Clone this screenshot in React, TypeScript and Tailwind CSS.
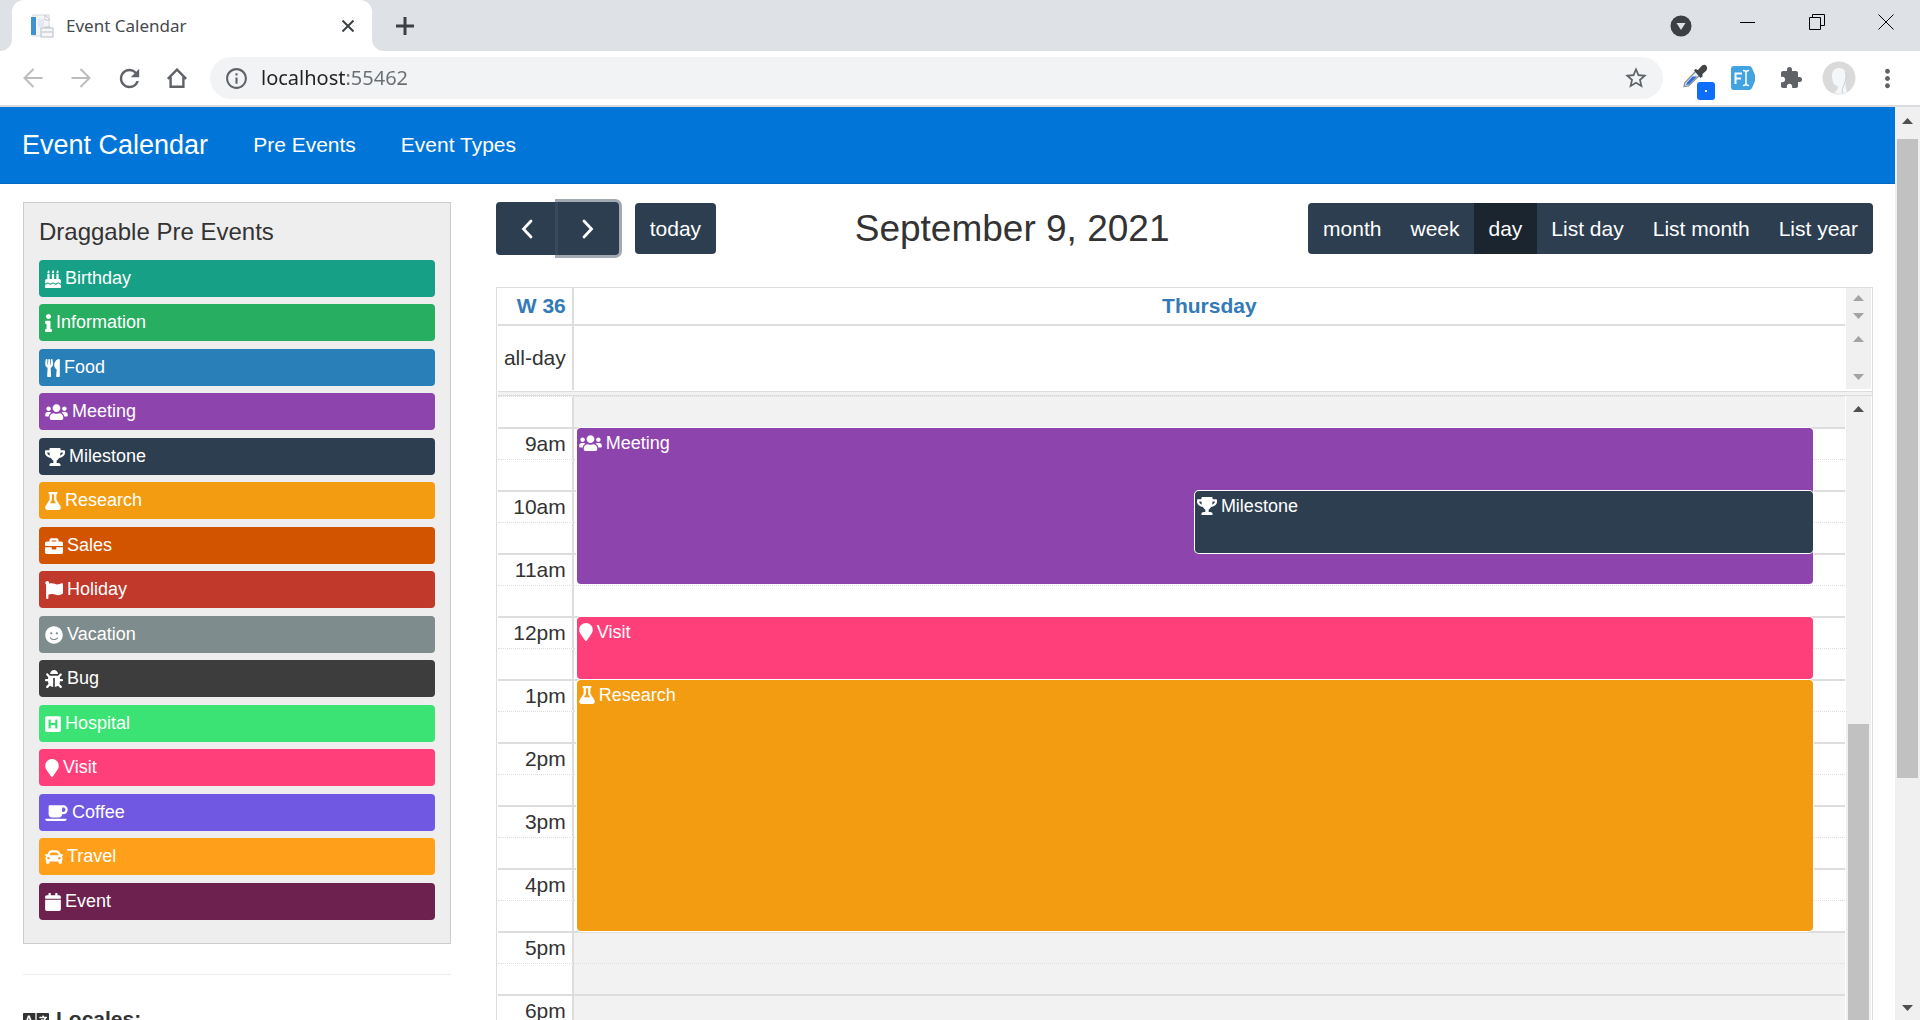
import type { ReactNode } from "react";
import type { IconType } from "react-icons";
import {
  FaBirthdayCake,
  FaBriefcase,
  FaBug,
  FaCalendar,
  FaCar,
  FaCoffee,
  FaFlag,
  FaFlask,
  FaHSquare,
  FaInfo,
  FaLanguage,
  FaMapMarker,
  FaSmile,
  FaTrophy,
  FaUsers,
  FaUtensils,
} from "react-icons/fa";
import {
  MdExtension,
  MdMoreVert,
  MdOutlineInfo,
  MdRefresh,
  MdStarBorder,
} from "react-icons/md";

type EventType = { name: string; icon: IconType; color: string; iconWidth: string };

const meeting: EventType = { name: "Meeting", icon: FaUsers, color: "bg-[#8e44ad]", iconWidth: "w-[23px]" };
const milestone: EventType = { name: "Milestone", icon: FaTrophy, color: "bg-[#2c3e50]", iconWidth: "w-[20px]" };
const research: EventType = { name: "Research", icon: FaFlask, color: "bg-[#f39c12]", iconWidth: "w-[16px]" };
const visit: EventType = { name: "Visit", icon: FaMapMarker, color: "bg-[#ff3f7a]", iconWidth: "w-[14px]" };

const preEvents: EventType[] = [
  { name: "Birthday", icon: FaBirthdayCake, color: "bg-[#16a085]", iconWidth: "w-[16px]" },
  { name: "Information", icon: FaInfo, color: "bg-[#27ae60]", iconWidth: "w-[7px]" },
  { name: "Food", icon: FaUtensils, color: "bg-[#2980b9]", iconWidth: "w-[15px]" },
  meeting,
  milestone,
  research,
  { name: "Sales", icon: FaBriefcase, color: "bg-[#d35400]", iconWidth: "w-[18px]" },
  { name: "Holiday", icon: FaFlag, color: "bg-[#c0392b]", iconWidth: "w-[18px]" },
  { name: "Vacation", icon: FaSmile, color: "bg-[#7f8c8d]", iconWidth: "w-[18px]" },
  { name: "Bug", icon: FaBug, color: "bg-[#3d3d3d]", iconWidth: "w-[18px]" },
  { name: "Hospital", icon: FaHSquare, color: "bg-[#3ae374]", iconWidth: "w-[16px]" },
  visit,
  { name: "Coffee", icon: FaCoffee, color: "bg-[#7158e2]", iconWidth: "w-[23px]" },
  { name: "Travel", icon: FaCar, color: "bg-[#ff9f1a]", iconWidth: "w-[18px]" },
  { name: "Event", icon: FaCalendar, color: "bg-[#6d214f]", iconWidth: "w-[16px]" },
];

type Booking = { type: EventType; start: number; end: number; place: string };

const bookings: Booking[] = [
  { type: meeting, start: 9, end: 11.5, place: "left-0" },
  { type: milestone, start: 10, end: 11, place: "left-1/2" },
  { type: visit, start: 12, end: 13, place: "left-0" },
  { type: research, start: 13, end: 17, place: "left-0" },
];

const hours = [9, 10, 11, 12, 13, 14, 15, 16, 17, 18];
const HOUR = 63;
const FIRST_LINE = 31;
const lineY = (hour: number) => FIRST_LINE + Math.floor((hour - 9) * HOUR);
const hourLabel = (h: number) => (h < 12 ? `${h}am` : h === 12 ? "12pm" : `${h - 12}pm`);

const views = ["month", "week", "day", "List day", "List month", "List year"];

function Arrow({ down }: { down?: boolean }) {
  return (
    <svg viewBox="0 0 11 6" className="h-[6px] w-[11px]" fill="currentColor" aria-hidden="true">
      <path d={down ? "M0 0h11L5.500 6z" : "M0 6h11L5.500 0z"} />
    </svg>
  );
}

function ScrollButton({ label, down, className }: { label: string; down?: boolean; className: string }) {
  return (
    <button type="button" aria-label={label} className={`flex w-full shrink-0 items-center justify-center ${className}`}>
      <Arrow down={down} />
    </button>
  );
}

function ToolButton({ label, children, className = "" }: { label: string; children: ReactNode; className?: string }) {
  return (
    <button
      type="button"
      aria-label={label}
      className={`flex h-10 w-12 shrink-0 items-center justify-center text-[#5f6368] ${className}`}
    >
      {children}
    </button>
  );
}

function Favicon() {
  return (
    <svg viewBox="0 0 24 24" className="size-6" aria-hidden="true">
      <rect x="3" y="1" width="16" height="21" fill="#f3f5f7" stroke="#d5d9de" />
      <rect x="1" y="3" width="5" height="18" fill="#3f94cf" />
      <path d="M15 1l5 5h-5z" fill="#fff" stroke="#c3c8ce" />
      <rect x="8" y="5" width="6" height="8" fill="#e3e8f4" />
      <rect x="11" y="14" width="12" height="9" fill="#f6f7fb" stroke="#b9bec5" />
      <path d="M12 18h10M15 14v-1h5v1" fill="none" stroke="#b9bec5" />
    </svg>
  );
}

function Browser() {
  return (
    <header className="shrink-0 font-['Noto_Sans',sans-serif]">
      <div className="flex h-[51px] bg-[#dee1e6] pl-3">
        <div className="relative flex w-[360px] items-center rounded-t-xl bg-white pr-3 pl-[18px]">
          <svg viewBox="0 0 12 12" className="absolute bottom-0 -left-3 size-3" fill="#fff" aria-hidden="true">
            <path d="M12 0v12H0A12 12 0 0 0 12 0z" />
          </svg>
          <svg viewBox="0 0 12 12" className="absolute -right-3 bottom-0 size-3" fill="#fff" aria-hidden="true">
            <path d="M0 0v12h12A12 12 0 0 1 0 0z" />
          </svg>
          <Favicon />
          <span className="ml-3 flex-1 text-[17px] text-[#45494d]">Event Calendar</span>
          <button type="button" aria-label="Close tab" className="flex size-6 items-center justify-center text-[#3c4043]">
            <svg viewBox="0 0 12 12" className="size-3" fill="none" stroke="currentColor" strokeWidth="2" aria-hidden="true">
              <path d="M0.500 0.500l11 11M11.500 0.500l-11 11" />
            </svg>
          </button>
        </div>
        <button type="button" aria-label="New tab" className="ml-[15px] flex w-9 items-center justify-center text-[#3c4043]">
          <svg viewBox="0 0 18 18" className="size-[18px]" fill="none" stroke="currentColor" strokeWidth="3" aria-hidden="true">
            <path d="M9 0v18M0 9h18" />
          </svg>
        </button>
        <div className="ml-auto flex">
          <button type="button" aria-label="Search tabs" className="flex w-16 items-center justify-center">
            <svg viewBox="0 0 22 22" className="size-[22px]" aria-hidden="true">
              <circle cx="11" cy="11" r="10.500" fill="#3c4043" />
              <path d="M6.500 8h9L11 15z" fill="#dee1e6" />
            </svg>
          </button>
          <button type="button" aria-label="Minimize" className="flex h-11 w-[69px] items-center justify-center">
            <svg viewBox="0 0 15 15" className="size-[15px]" stroke="#000" aria-hidden="true">
              <path d="M0 7.500h15" />
            </svg>
          </button>
          <button type="button" aria-label="Restore" className="flex h-11 w-[69px] items-center justify-center">
            <svg viewBox="0 0 16 16" className="size-4" fill="none" stroke="#000" aria-hidden="true">
              <path d="M0.500 3.500h11v12h-11zM3.500 3.500v-3h12v11h-4" />
            </svg>
          </button>
          <button type="button" aria-label="Close window" className="flex h-11 w-[69px] items-center justify-center">
            <svg viewBox="0 0 16 16" className="size-4" fill="none" stroke="#000" aria-hidden="true">
              <path d="M0.500 0.500l15 15M15.500 0.500l-15 15" />
            </svg>
          </button>
        </div>
      </div>
      <div className="flex h-14 items-center border-b-2 border-[#dadce0] bg-white px-[9px]">
        <ToolButton label="Back" className="text-[#babcbe]">
          <svg viewBox="0 0 20 20" className="size-5" fill="none" stroke="#babcbe" strokeWidth="2" aria-hidden="true">
            <path d="M19.500 10H2M10.500 1L1.500 10l9 9" />
          </svg>
        </ToolButton>
        <ToolButton label="Forward" className="text-[#babcbe]">
          <svg viewBox="0 0 20 20" className="size-5" fill="none" stroke="#babcbe" strokeWidth="2" aria-hidden="true">
            <path d="M0.500 10H18M9.500 1l9 9-9 9" />
          </svg>
        </ToolButton>
        <ToolButton label="Reload">
          <MdRefresh className="size-[29px]" />
        </ToolButton>
        <ToolButton label="Home">
          <svg viewBox="0 0 20 20" className="size-5" fill="none" stroke="currentColor" strokeWidth="2.400" aria-hidden="true">
            <path d="M0.800 10.800L10 1.600l9.200 9.200M3.600 9v9.800h12.800V9" />
          </svg>
        </ToolButton>
        <div className="ml-[9px] flex h-[42px] flex-1 items-center rounded-full bg-[#f1f3f4] px-[14px]">
          <MdOutlineInfo className="size-[25px] text-[#5f6368]" />
          <input
            aria-label="Address"
            defaultValue="localhost:55462"
            className="ml-3 min-w-0 flex-1 bg-[linear-gradient(90deg,#202124_84px,#6a6e73_84px)] bg-clip-text text-[20px] text-transparent outline-none"
          />
          <button type="button" aria-label="Bookmark" className="text-[#5f6368]">
            <MdStarBorder className="size-[26px]" />
          </button>
        </div>
        <ToolButton label="Color picker" className="ml-2">
          <span className="relative">
            <svg viewBox="0 0 28 28" className="size-7" aria-hidden="true">
              <path d="M3 22.500l1-4L15 7l4 4L7.500 22z" fill="#e8eef6" stroke="#8b9099" strokeWidth="1.300" />
              <path d="M5 21l1-2.500 5.500-6H16L8 20.500z" fill="#2f6fd0" />
              <path d="M13 6.500l1.500-1.500 2.500 1 4-4.500q3-1.500 4.500.500t0 4.500L21.500 10v2.500l-2 1.500z" fill="#444" />
            </svg>
            <span className="absolute top-[18px] left-[16px] flex size-[18px] items-center justify-center rounded-[3px] bg-[#0d6efd]">
              <span className="size-[2px] bg-white" />
            </span>
          </span>
        </ToolButton>
        <ToolButton label="Font identifier">
          <svg viewBox="0 0 24 24" className="size-6" fill="none" aria-hidden="true">
            <path d="M3 0h15q2 0 3 2l3 7v6l-3 7q-1 2-3 2H3q-3 0-3-3V3q0-3 3-3z" fill="#43a3e0" />
            <path d="M4.500 18V7.500H11M4.500 12.500H10" stroke="#fff" strokeWidth="2" />
            <path d="M12 4.500q3 0 3 2v11q0 2-3 2M18 4.500q-3 0-3 2v11q0 2 3 2" stroke="#fff" strokeWidth="1.500" />
          </svg>
        </ToolButton>
        <ToolButton label="Extensions">
          <MdExtension className="size-6" />
        </ToolButton>
        <ToolButton label="Profile">
          <svg viewBox="0 0 34 34" className="size-[34px]" aria-hidden="true">
            <circle cx="17" cy="17" r="16.500" fill="#dadada" />
            <path d="M10.500 19C9 12 11 7 17 7s7.500 4 7 11c-.5 4-1 7 1 13q-6 3-13 1 4-3 4-7-4.500 0-5.500-6z" fill="#f4f7fa" />
            <path d="M23.500 11c1.500 6-.5 10-2 14q-2 4-1 7" fill="none" stroke="#c5cfda" />
          </svg>
        </ToolButton>
        <ToolButton label="Menu">
          <MdMoreVert className="size-[29px]" />
        </ToolButton>
      </div>
    </header>
  );
}

function EventLabel({ type }: { type: EventType }) {
  const Icon = type.icon;
  return (
    <>
      <Icon className={`h-[18px] shrink-0 ${type.iconWidth}`} aria-hidden="true" />
      <span>{type.name}</span>
    </>
  );
}

function Sidebar() {
  return (
    <aside className="w-1/4 shrink-0 px-[23px]">
      <section className="border border-[#ccc] bg-[#eee] px-[15px] pt-[15px] pb-4">
        <h4 className="mb-[14px] text-[24px] leading-7">Draggable Pre Events</h4>
        <ul>
          {preEvents.map((type) => (
            <li
              key={type.name}
              draggable
              className={`flex h-[37px] cursor-pointer items-center gap-1 rounded pl-[6px] text-[18px] text-white odd:mb-[7px] even:mb-2 ${type.color}`}
            >
              <EventLabel type={type} />
            </li>
          ))}
        </ul>
      </section>
      <hr className="mt-[30px] mb-7 border-[#eee]" />
      <h5 className="flex items-center gap-[7px] text-[21px] leading-8 font-bold">
        <FaLanguage className="h-[21px] w-[26px]" aria-hidden="true" />
        Locales:
      </h5>
    </aside>
  );
}

function Toolbar() {
  const button = "h-[51px] px-[15px] text-[21px] text-white";
  const arrowButton = "flex h-[53px] items-center justify-center bg-[#2c3e50]";
  return (
    <div className="flex items-center justify-between">
      <div className="flex items-center gap-4">
        <div className="flex">
          <button type="button" aria-label="Previous" className={`${arrowButton} w-[62px] rounded-l`}>
            <svg viewBox="0 0 12 20" className="h-5 w-3" fill="none" stroke="#fff" strokeWidth="2.800" strokeLinecap="round" aria-hidden="true">
              <path d="M10 2L2.500 10l7.500 8" />
            </svg>
          </button>
          <button
            type="button"
            aria-label="Next"
            className={`${arrowButton} relative w-[61px] rounded-r shadow-[0_0_0_3px_rgba(68,84,102,0.5)]`}
          >
            <svg viewBox="0 0 12 20" className="h-5 w-3" fill="none" stroke="#fff" strokeWidth="2.800" strokeLinecap="round" aria-hidden="true">
              <path d="M2 2l7.500 8L2 18" />
            </svg>
          </button>
        </div>
        <button type="button" className={`${button} rounded bg-[#2c3e50]`}>today</button>
      </div>
      <h2 className="text-[37px] leading-[53px]">September 9, 2021</h2>
      <div className="flex overflow-hidden rounded">
        {views.map((view) => (
          <button
            key={view}
            type="button"
            aria-pressed={view === "day"}
            className={`${button} -mr-px last:mr-0 ${view === "day" ? "relative bg-[#1a252f]" : "bg-[#2c3e50]"}`}
          >
            {view}
          </button>
        ))}
      </div>
    </div>
  );
}

function Calendar() {
  return (
    <section className="flex min-h-0 flex-1 flex-col border border-b-0 border-[#ddd]">
      <div className="flex gap-px px-px">
        <table className="flex-1 table-fixed border-separate border-spacing-0">
          <thead className="block">
            <tr className="flex h-[38px] border-b-2 border-[#ddd] text-[21px] leading-[35px] text-[#337ab7]">
              <th scope="col" className="w-[76px] border-r-2 border-[#ddd] pr-[6px] text-right">
                <a href="#week">W 36</a>
              </th>
              <th scope="col" className="flex-1 text-center">
                <a href="#day">Thursday</a>
              </th>
            </tr>
          </thead>
          <tbody className="block">
            <tr className="flex h-16 text-[21px] leading-[64px]">
              <th scope="row" className="w-[76px] border-r-2 border-[#ddd] pr-[6px] text-right font-normal">all-day</th>
              <td className="flex-1" />
            </tr>
          </tbody>
        </table>
        <div className="mb-px flex w-[25px] flex-col bg-[#f0f0f0] text-[#a3a3a3]">
          <ScrollButton label="Scroll header up" className="h-5" />
          <ScrollButton label="Scroll header down" down className="h-4" />
          <ScrollButton label="Scroll all-day up" className="mt-[5px] h-5" />
          <ScrollButton label="Scroll all-day down" down className="mt-auto h-6" />
        </div>
      </div>
      <div className="mt-px ml-px h-[5px] shrink-0 border-y border-[#ddd] bg-[#f2f2f2]" />
      <div className="flex min-h-0 flex-1 gap-px px-px">
        <div className="relative min-w-0 flex-1 overflow-hidden">
          <table className="w-full table-fixed border-separate border-spacing-0 text-[21px] leading-7">
            <colgroup>
              <col className="w-[76px]" />
              <col />
            </colgroup>
            <tbody>
              <tr>
                <td className="h-[31px] border-t border-r-2 border-dotted border-[#ddd] [border-right-style:solid]" />
                <td className="border-t border-dotted border-[#ddd] bg-[#f2f2f2]" />
              </tr>
            </tbody>
            {hours.map((hour) => {
              const shade = hour >= 17 ? "bg-[#f2f2f2]" : "";
              return (
                <tbody key={hour}>
                  <tr>
                    <th scope="row" className="h-8 border-t-2 border-r-2 border-[#ddd] p-0 pr-[6px] text-right align-middle font-normal">
                      {hourLabel(hour)}
                    </th>
                    <td className={`border-t-2 border-[#ddd] ${shade}`} />
                  </tr>
                  <tr>
                    <td className="h-[31px] border-t border-r-2 border-dotted border-[#ddd] [border-right-style:solid]" />
                    <td className={`border-t border-dotted border-[#ddd] ${shade}`} />
                  </tr>
                </tbody>
              );
            })}
          </table>
          {/* Bookings float over the slot grid, placed by their start and end times. */}
          <div className="absolute inset-y-0 right-0 left-[76px]">
            <div className="relative mr-[32px] ml-[3px] h-full">
              {bookings.map(({ type, start, end, place }) => (
                <a
                  key={type.name}
                  href={`#${type.name.toLowerCase()}`}
                  style={{ top: lineY(start) + 1, height: lineY(end) - lineY(start) - 1 }}
                  className={`absolute right-0 flex items-start gap-1 rounded px-[2px] pt-[6px] text-[18px] leading-[18px] text-white shadow-[0_0_0_1px_#fff] ${place} ${type.color}`}
                >
                  <EventLabel type={type} />
                </a>
              ))}
            </div>
          </div>
        </div>
        <div className="flex w-[25px] flex-col items-center bg-[#f0f0f0] text-[#505050]">
          <ScrollButton label="Scroll hours up" className="h-[26px]" />
          <div className="mt-auto h-[296px] w-[21px] bg-[#c1c1c1]" />
        </div>
      </div>
    </section>
  );
}

export default function App() {
  return (
    <div className="flex h-screen flex-col overflow-hidden bg-white font-['Liberation_Sans',Arial,sans-serif] text-[#333]">
      <Browser />
      <div className="flex min-h-0 flex-1">
        <div className="flex min-w-0 flex-1 flex-col overflow-hidden">
          <nav className="flex h-[77px] shrink-0 items-center gap-[45px] border-b border-[#0267bf] bg-[#0275d8] px-[22px] text-[21px] text-white">
            <a href="#home" className="text-[27px]">Event Calendar</a>
            <a href="#pre-events">Pre Events</a>
            <a href="#event-types">Event Types</a>
          </nav>
          <div className="flex min-h-0 flex-1 pt-[18px]">
            <Sidebar />
            <main className="flex min-w-0 flex-1 flex-col gap-8 px-[22px]">
              <Toolbar />
              <Calendar />
            </main>
          </div>
        </div>
        <div className="flex w-[25px] shrink-0 flex-col items-center bg-[#f0f0f0] text-[#505050]">
          <ScrollButton label="Scroll page up" className="mb-[5px] h-[27px]" />
          <div className="h-[70%] w-[21px] bg-[#c1c1c1]" />
          <ScrollButton label="Scroll page down" down className="mt-auto h-6" />
        </div>
      </div>
    </div>
  );
}
